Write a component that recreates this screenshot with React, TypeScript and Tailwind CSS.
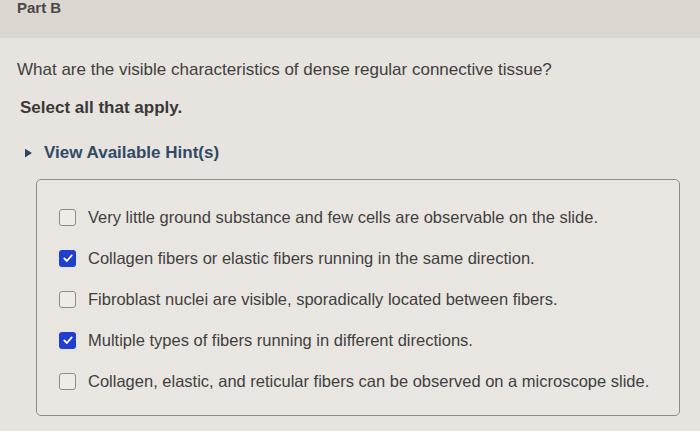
import React from "react";

const options = [
  { text: "Very little ground substance and few cells are observable on the slide.", checked: false },
  { text: "Collagen fibers or elastic fibers running in the same direction.", checked: true },
  { text: "Fibroblast nuclei are visible, sporadically located between fibers.", checked: false },
  { text: "Multiple types of fibers running in different directions.", checked: true },
  { text: "Collagen, elastic, and reticular fibers can be observed on a microscope slide.", checked: false },
];

function Box({ checked }: { checked: boolean }) {
  if (checked) {
    return (
      <span className="flex h-[17px] w-[17px] shrink-0 items-center justify-center rounded-[3px] bg-[#1f3fd1]">
        <svg viewBox="0 0 16 16" className="h-[12px] w-[12px]">
          <path d="M3 8.5 L6.5 12 L13 4.5" fill="none" stroke="white" strokeWidth="2.4" strokeLinecap="round" strokeLinejoin="round" />
        </svg>
      </span>
    );
  }
  return <span className="block h-[17px] w-[17px] shrink-0 rounded-[3px] border-[1.5px] border-[#8e8a86] bg-[#efece8]" />;
}

export default function App() {
  return (
    <div className="h-[431px] w-[700px] overflow-hidden bg-[#e7e3de] font-['Liberation_Sans',Arial,sans-serif] text-[#403f3e]">
      <div className="flex h-[38px] items-start bg-[#dbd6d0] pl-[17px]">
        <div className="text-[15px] font-bold leading-[16px] text-[#4a4846]">Part B</div>
      </div>
      <div className="pl-[17px] pt-[22px] text-[17px] leading-[20px]">
        What are the visible characteristics of dense regular connective tissue?
      </div>
      <div className="pl-[20px] pt-[18px] text-[17px] font-bold leading-[20px] text-[#3a3938]">Select all that apply.</div>
      <div className="flex items-center gap-[12px] pl-[25px] pt-[25px] text-[17px] font-bold leading-[20px] text-[#2f4a66]">
        <svg viewBox="0 0 8 10" className="h-[10px] w-[7px]">
          <path d="M0 0 L8 5 L0 10 Z" fill="#2b4560" />
        </svg>
        <span>View Available Hint(s)</span>
      </div>
      <div className="ml-[36px] mr-[20px] mt-[16px] h-[237px] rounded-[5px] border border-[#8f8b87] bg-[#e9e6e2] pl-[22px] pt-[27px]">
        <div className="flex flex-col gap-[21px]">
          {options.map((o, i) => (
            <div key={i} className="flex items-center gap-[12px] text-[16.5px] leading-[20px]">
              <Box checked={o.checked} />
              <span>{o.text}</span>
            </div>
          ))}
        </div>
      </div>
    </div>
  );
}
